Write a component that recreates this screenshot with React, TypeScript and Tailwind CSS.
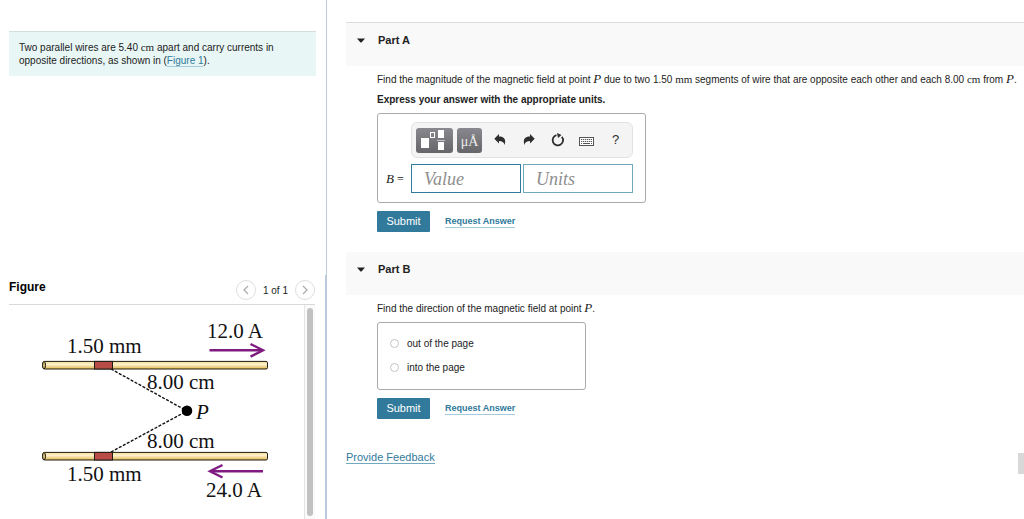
import { useState } from "react";
import type { ReactNode } from "react";

const directions = ["out of the page", "into the page"];

const serif = "font-['Liberation_Serif','Noto_Sans',serif]";

function MathVar({ children }: { children: ReactNode }) {
  return <i className={`${serif} text-[13px] leading-none`}>{children}</i>;
}

function Unit({ children }: { children: ReactNode }) {
  return <span className={`${serif} text-[11px] leading-none`}>{children}</span>;
}

function Wire({ y }: { y: number }) {
  return (
    <g stroke="#1f1a12">
      <rect x="34" y={y} width="224.500" height="7.600" rx="1.5" fill="url(#wire)" strokeWidth="1" />
      <rect x="85.500" y={y} width="18" height="7.600" fill="#b84d47" strokeWidth="1" />
      <ellipse cx="35" cy={y + 3.8} rx="1.5" ry="3.6" fill="#d9c27c" strokeWidth="1" />
    </g>
  );
}

function WireFigure() {
  return (
    <svg
      width="295"
      height="214"
      viewBox="0 0 295 214"
      className={serif}
      role="img"
      aria-label="Two parallel wires"
    >
      <defs>
        <linearGradient id="wire" x1="0" y1="0" x2="0" y2="1">
          <stop offset="0" stopColor="#f4dc92" />
          <stop offset="0.4" stopColor="#fdf1cc" />
          <stop offset="1" stopColor="#dfb850" />
        </linearGradient>
      </defs>
      <g stroke="#111" strokeWidth="1.4" strokeDasharray="3 1.5">
        <path d="M102 64 L178 106" />
        <path d="M102 147 L178 106" />
      </g>
      <Wire y={56.4} />
      <Wire y={147.4} />
      <circle cx="178" cy="105.700" r="5.300" fill="#000" />
      <g stroke="#7f1a80" strokeWidth="2.400" fill="none">
        <path d="M200.500 45.300 H253" />
        <path d="M241.500 39 L254 45.300 L241.500 51.600" />
        <path d="M254 166.200 H202" />
        <path d="M213.500 160 L201 166.200 L213.500 172.500" />
      </g>
      <g fill="#111" fontSize="21">
        <text x="58" y="48">1.50 mm</text>
        <text x="198" y="33">12.0 A</text>
        <text x="138" y="84">8.00 cm</text>
        <text x="187" y="114" fontStyle="italic">P</text>
        <text x="138" y="143">8.00 cm</text>
        <text x="58" y="176">1.50 mm</text>
        <text x="197" y="192">24.0 A</text>
      </g>
    </svg>
  );
}

function PageButton({ label, path }: { label: string; path: string }) {
  return (
    <button
      aria-label={label}
      className="flex size-5 items-center justify-center rounded-full border border-[#dedede] bg-white"
    >
      <svg width="8" height="10" viewBox="0 0 8 10" fill="none" stroke="#aaa" strokeWidth="1.2">
        <path d={path} />
      </svg>
    </button>
  );
}

function ToolButton({ label, children }: { label: string; children: ReactNode }) {
  return (
    <button aria-label={label} className="flex h-[25px] w-[29px] items-center justify-center text-[#2e2e2e]">
      {children}
    </button>
  );
}

function Toolbar() {
  return (
    <div className="flex h-9 items-center rounded-md border border-[#e2e2e2] bg-[#f4f4f4] pl-1">
      <button
        aria-label="Templates"
        className="mr-1 flex h-[25px] w-[37px] items-center justify-center rounded-[3px] bg-linear-to-b from-[#88888e] to-[#66666a]"
      >
        <svg width="37" height="25" viewBox="0 0 37 25">
          <rect x="5" y="10" width="8" height="10" fill="#fff" />
          <rect x="14.500" y="4.500" width="4" height="5" fill="none" stroke="#fff" />
          <rect x="22" y="2" width="6" height="8" fill="#fff" />
          <path d="M21 12.500 H29" stroke="#c8c8cc" />
          <rect x="22" y="14" width="6" height="8" fill="#fff" />
        </svg>
      </button>
      <button
        aria-label="Symbols"
        className={`${serif} mr-[3px] flex h-[25px] w-[25px] items-center justify-center rounded-[3px] bg-linear-to-b from-[#88888e] to-[#66666a] pt-[2px] text-[14px] text-[#eee]`}
      >
        μÅ
      </button>
      <ToolButton label="Undo">
        <svg width="12" height="12" viewBox="0 0 12 12" fill="currentColor">
          <path d="M5 0 V2.500 C10 2.500 12.500 5.500 10.500 11 C10 8 8 7 5 7 V9.500 L0.300 4.800 Z" />
        </svg>
      </ToolButton>
      <ToolButton label="Redo">
        <svg width="12" height="12" viewBox="0 0 12 12" fill="currentColor">
          <path d="M7 0 V2.500 C2 2.500 -.5 5.500 1.500 11 C2 8 4 7 7 7 V9.500 L11.700 4.800 Z" />
        </svg>
      </ToolButton>
      <ToolButton label="Reset">
        <svg width="14" height="14" viewBox="0 0 14 14" fill="none" stroke="currentColor">
          <path d="M10.800 3.800 A5.200 5.200 0 1 1 5.500 2.200" strokeWidth="1.800" />
          <path d="M6 0 L10.500 2 L7 5 Z" fill="currentColor" stroke="none" />
        </svg>
      </ToolButton>
      <ToolButton label="Keyboard">
        <svg width="15" height="13" viewBox="0 0 15 13" fill="none" stroke="#555">
          <rect x=".5" y="3.500" width="14" height="8" fill="#fff" />
          <path d="M2 5.500 H13 M2 7.500 H13" strokeDasharray="1.300 .7" />
          <path d="M2 9.500 H3 M4 9.500 H11 M12 9.500 H13" />
        </svg>
      </ToolButton>
      <ToolButton label="Help">
        <span className="text-[13px]">?</span>
      </ToolButton>
    </div>
  );
}

function PartHeader({ title, first }: { title: string; first?: boolean }) {
  return (
    <header
      className={`flex items-start gap-[13px] bg-[#f9f9f9] pt-[9px] pb-[18px] pl-[11px] ${
        first ? "border-t border-[#dcdcdc]" : ""
      }`}
    >
      <svg width="8" height="5" viewBox="0 0 8 5" className="mt-[6px]">
        <path d="M0 .5 H8 L4.500 4.500 H3.500 Z" fill="#222" />
      </svg>
      <h2 className="text-[11px] leading-4 font-bold">{title}</h2>
    </header>
  );
}

function Actions() {
  return (
    <div className="flex items-center gap-[15px]">
      <button className="h-[21px] w-[53px] rounded-[1px] bg-[#317a9b] text-[11px] text-white">Submit</button>
      <a
        href="#answer"
        className="border-b border-[#a5cbdc] text-[9px] leading-[11px] font-bold text-[#317a9b]"
      >
        Request Answer
      </a>
    </div>
  );
}

export default function App() {
  const [direction, setDirection] = useState("");

  return (
    <div className="relative flex min-h-screen bg-white font-['Liberation_Sans',Arial,sans-serif] text-[10px] text-[#222]">
      {/* Problem statement and figure */}
      <aside className="flex w-[327px] shrink-0 flex-col">
        <div className="flex-1 border-r border-[#bccbdc] pt-[31px] pr-[10px] pl-[9px]">
          <p className="border-t border-[#d4dedd] bg-[#e8f6f5] px-[10px] pt-[9px] pb-[9px] leading-[13px]">
            Two parallel wires are 5.40 <Unit>cm</Unit> apart and carry currents in opposite directions, as shown in (
            <a href="#figure" className="text-[#317a9b] underline decoration-[#a5cbdc] underline-offset-2">
              Figure 1
            </a>
            ).
          </p>
        </div>

        <section id="figure" className="border-r-2 border-[#bccbdc] pr-[10px] pl-[9px]">
          <div className="flex h-[30px] items-center justify-between border-b border-[#d9d9d9]">
            <h2 className="pb-[6px] text-[12px] font-bold text-black">Figure</h2>
            <div className="flex items-center gap-[7px]">
              <PageButton label="Previous" path="M6 1 L2 5 L6 9" />
              <span className="pt-[2px]">1 of 1</span>
              <PageButton label="Next" path="M2 1 L6 5 L2 9" />
            </div>
          </div>
          <div className="flex">
            <div className="min-w-0 flex-1">
              <WireFigure />
            </div>
            <div className="w-[11px] border-l border-[#e4e4e4] bg-[#fafafa] px-[2px] py-[3px]">
              <div className="h-full rounded-full bg-[#c1c1c1]" />
            </div>
          </div>
        </section>
      </aside>

      {/* Parts */}
      <main className="min-w-0 flex-1 pt-[22px] pl-[19px]">
        <PartHeader title="Part A" first />
        <div className="pt-1 pb-5 pl-[31px]">
          <p className="leading-5 whitespace-nowrap">
            Find the magnitude of the magnetic field at point <MathVar>P</MathVar> due to two 1.50 <Unit>mm</Unit>{" "}
            segments of wire that are opposite each other and each 8.00 <Unit>cm</Unit> from <MathVar>P</MathVar>.
          </p>
          <p className="leading-5 font-bold">Express your answer with the appropriate units.</p>
          <div className="mt-[3px] mb-2 grid w-[269px] grid-cols-[25px_1fr] gap-y-[6px] rounded-[3px] border border-[#aaa] pt-2 pr-3 pb-[9px] pl-2">
            <div className="col-start-2">
              <Toolbar />
            </div>
            <label htmlFor="value" className={`${serif} self-center text-[12px]`}>
              <i className="text-[13px]">B</i> =
            </label>
            <div className="flex gap-[2px]">
              <input
                id="value"
                placeholder="Value"
                className={`${serif} h-[29px] w-full min-w-0 border border-[#317a9b] px-3 pt-[2px] text-[18px] italic placeholder:text-[#8e8e8e]`}
              />
              <input
                aria-label="Units"
                placeholder="Units"
                className={`${serif} h-[29px] w-full min-w-0 border border-[#73a9bf] px-3 pt-[2px] text-[18px] italic placeholder:text-[#8e8e8e]`}
              />
            </div>
          </div>
          <Actions />
        </div>

        <PartHeader title="Part B" />
        <div className="pt-1 pl-[31px]">
          <p className="leading-5">
            Find the direction of the magnetic field at point <MathVar>P</MathVar>.
          </p>
          <fieldset className="mt-[3px] mb-2 w-[209px] rounded-[3px] border border-[#aaa] px-3 pt-2 pb-[10px]">
            {directions.map((option) => (
              <label key={option} className="flex h-6 items-center gap-2">
                <input
                  type="radio"
                  name="direction"
                  value={option}
                  checked={direction === option}
                  onChange={() => setDirection(option)}
                  className="size-[9px] appearance-none rounded-full border border-[#c4c4c4] bg-white checked:bg-[#317a9b]"
                />
                {option}
              </label>
            ))}
          </fieldset>
          <Actions />
        </div>

        <a
          href="#feedback"
          className="mt-8 inline-block border-b border-[#73a9bf] text-[11px] leading-3 text-[#317a9b]"
        >
          Provide Feedback
        </a>
      </main>

      <div className="absolute top-[453px] right-0 h-[21px] w-[6px] bg-[#d8d8d8]" />
    </div>
  );
}
